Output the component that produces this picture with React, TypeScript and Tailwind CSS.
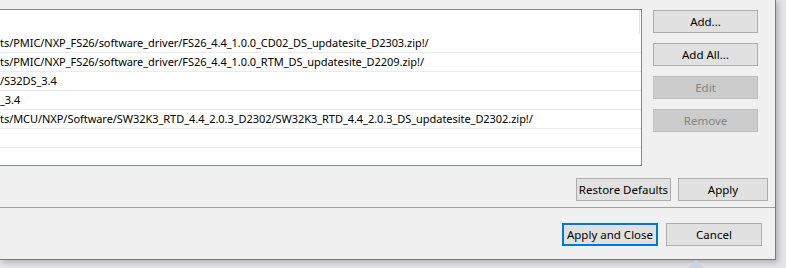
import React from "react";

const rows = [
  "ts/PMIC/NXP_FS26/software_driver/FS26_4.4_1.0.0_CD02_DS_updatesite_D2303.zip!/",
  "ts/PMIC/NXP_FS26/software_driver/FS26_4.4_1.0.0_RTM_DS_updatesite_D2209.zip!/",
  "/S32DS_3.4",
  "_3.4",
  "ts/MCU/NXP/Software/SW32K3_RTD_4.4_2.0.3_D2302/SW32K3_RTD_4.4_2.0.3_DS_updatesite_D2302.zip!/",
  "",
  "",
];

function Btn({
  children,
  w,
  disabled,
  primary,
}: {
  children: React.ReactNode;
  w: string;
  disabled?: boolean;
  primary?: boolean;
}) {
  const base = "h-[23px] flex items-center justify-center text-[11.5px] leading-none whitespace-nowrap";
  let cls = "bg-[#e1e1e1] border border-[#adadad] text-black";
  if (disabled) cls = "bg-[#cccccc] border border-[#bfbfbf] text-[#838383]";
  if (primary) cls = "bg-[#e1e1e1] border-2 border-[#0078d7] text-black";
  return <div className={`${base} ${cls} ${w}`}>{children}</div>;
}

export default function App() {
  return (
    <div
      className="relative w-[786px] h-[268px] overflow-hidden bg-[#e4e4e8]"
      style={{ fontFamily: '"Noto Sans", "Open Sans", sans-serif' }}
    >
      <div className="w-[776px] h-[260px] bg-[#f0f0f0] border-r border-b border-[#7a7a7a] shadow-[2px_2px_6px_rgba(0,0,0,0.25)] flex flex-col">
        <div className="flex pt-[9px]">
          <div className="w-[642px] h-[157px] bg-white border-t border-r border-b border-[#828790] flex flex-col overflow-hidden">
            <div className="h-[24px] flex justify-end shrink-0">
              <div className="w-px h-[24px] bg-[#e5e5e5] mr-px" />
            </div>
            {rows.map((r, i) => (
              <div
                key={i}
                className="h-[19px] shrink-0 border-b border-[#ebebeb] flex items-center whitespace-nowrap text-[11px] tracking-[-0.05px] text-black"
              >
                <span>{r}</span>
              </div>
            ))}
          </div>
          <div className="ml-[11px] mt-[1px] flex flex-col gap-[10px] w-[105px]">
            <Btn w="w-[105px]">Add...</Btn>
            <Btn w="w-[105px]">Add All...</Btn>
            <Btn w="w-[105px]" disabled>
              Edit
            </Btn>
            <Btn w="w-[105px]" disabled>
              Remove
            </Btn>
          </div>
        </div>
        <div className="flex justify-end gap-[7px] pr-[7px] mt-[12px]">
          <Btn w="w-[95px]">Restore Defaults</Btn>
          <Btn w="w-[90px]">Apply</Btn>
        </div>
        <div className="mt-[6px] h-px bg-[#a0a0a0]" />
        <div className="flex justify-end gap-[8px] pr-[13px] mt-[15px]">
          <Btn w="w-[96px]" primary>
            Apply and Close
          </Btn>
          <Btn w="w-[96px]">Cancel</Btn>
        </div>
      </div>
      <svg className="absolute left-[688px] top-[260px]" width="16" height="8" viewBox="0 0 16 8">
        <polygon points="0,8 6,2 8,0 10,2 16,8" fill="#cdd2e2" />
      </svg>
    </div>
  );
}
